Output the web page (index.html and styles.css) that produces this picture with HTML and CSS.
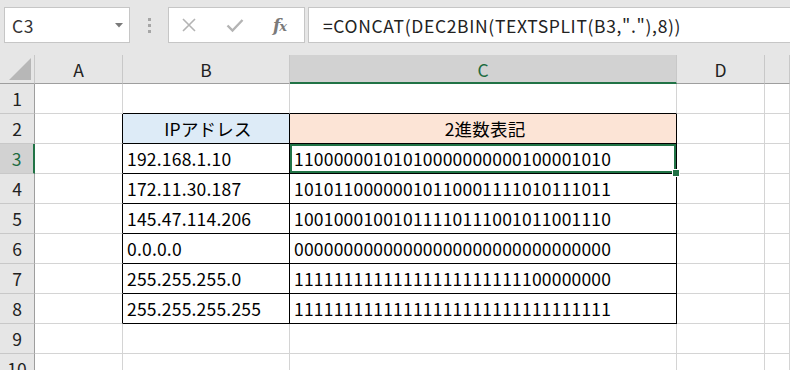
FILE: index.html
```html
<!DOCTYPE html>
<html lang="ja">
<head>
    <meta charset="UTF-8">
    <title>Excel - CONCAT</title>
    <link rel="stylesheet" href="styles.css">
</head>
<body>
    <div class="toolbar">
        <div class="namebox">
            <span>C3</span>
            <svg class="caret" width="8" height="5" viewBox="0 0 8 5"><path d="M0 0h8L4 4.5z" fill="#7a7a7a"/></svg>
        </div>
        <div class="grip">
            <i></i><i></i><i></i>
        </div>
        <div class="fxbox">
            <svg width="16" height="16" viewBox="0 0 16 16"><path d="M2 2l12 12M14 2L2 14" stroke="#b4b4b4" stroke-width="1.6" fill="none"/></svg>
            <svg width="18" height="16" viewBox="0 0 18 16"><path d="M1.5 8.5l5 5L16.5 3" stroke="#b4b4b4" stroke-width="2.4" fill="none"/></svg>
            <span class="fx">f<small>x</small></span>
        </div>
        <div class="formula">=CONCAT(DEC2BIN(TEXTSPLIT(B3,"."),8))</div>
    </div>

    <div class="sheet">
        <div class="hd corner"><svg width="22" height="22" viewBox="0 0 22 22"><path d="M0 22H22V0z" fill="#b7b7b7"/></svg></div>
        <div class="hd col">A</div>
        <div class="hd col">B</div>
        <div class="hd col sel-col">C</div>
        <div class="hd col">D</div>
        <div class="hd col"></div>

        <div class="hd row">1</div>
        <div class="c"></div>
        <div class="c tb"></div>
        <div class="c tb"></div>
        <div class="c"></div>
        <div class="c"></div>

        <div class="hd row">2</div>
        <div class="c tl"></div>
        <div class="c t th-blue">IPアドレス</div>
        <div class="c t th-orange">2進数表記</div>
        <div class="c"></div>
        <div class="c"></div>

        <div class="hd row sel-row">3</div>
        <div class="c tl"></div>
        <div class="c t">192.168.1.10</div>
        <div class="c t active">11000000101010000000000100001010</div>
        <div class="c"></div>
        <div class="c"></div>

        <div class="hd row">4</div>
        <div class="c tl"></div>
        <div class="c t">172.11.30.187</div>
        <div class="c t">10101100000010110001111010111011</div>
        <div class="c"></div>
        <div class="c"></div>

        <div class="hd row">5</div>
        <div class="c tl"></div>
        <div class="c t">145.47.114.206</div>
        <div class="c t">10010001001011110111001011001110</div>
        <div class="c"></div>
        <div class="c"></div>

        <div class="hd row">6</div>
        <div class="c tl"></div>
        <div class="c t">0.0.0.0</div>
        <div class="c t">00000000000000000000000000000000</div>
        <div class="c"></div>
        <div class="c"></div>

        <div class="hd row">7</div>
        <div class="c tl"></div>
        <div class="c t">255.255.255.0</div>
        <div class="c t">11111111111111111111111100000000</div>
        <div class="c"></div>
        <div class="c"></div>

        <div class="hd row">8</div>
        <div class="c tl"></div>
        <div class="c t">255.255.255.255</div>
        <div class="c t">11111111111111111111111111111111</div>
        <div class="c"></div>
        <div class="c"></div>

        <div class="hd row">9</div>
        <div class="c"></div>
        <div class="c"></div>
        <div class="c"></div>
        <div class="c"></div>
        <div class="c"></div>

        <div class="hd row">10</div>
        <div class="c"></div>
        <div class="c"></div>
        <div class="c"></div>
        <div class="c"></div>
        <div class="c"></div>
    </div>
</body>
</html>
```

FILE: styles.css
```css
body {
    margin: 0;
    width: 790px;
    height: 370px;
    overflow: hidden;
    background-color: #fff;
    font-family: "Noto Sans CJK JP", "Noto Sans", sans-serif;
    font-size: 17.5px;
    color: #000;
}

/* formula bar */
.toolbar {
    height: 55px;
    background-color: #e6e6e6;
    display: flex;
    align-items: flex-start;
    padding-top: 7px;
    box-sizing: border-box;
}

.namebox {
    margin-left: 4px;
    width: 126px;
    height: 36px;
    box-sizing: border-box;
    background-color: #fff;
    border: 1px solid #c6c6c6;
    display: flex;
    align-items: center;
    justify-content: space-between;
    padding: 0 6px 0 7px;
    color: #333;
    letter-spacing: 0.5px;
}

.grip {
    width: 38px;
    height: 36px;
    display: flex;
    flex-direction: column;
    align-items: center;
    justify-content: center;
    gap: 3px;
}

.grip i {
    display: block;
    width: 3px;
    height: 3px;
    background-color: #a6a6a6;
}

.fxbox {
    width: 137px;
    height: 36px;
    box-sizing: border-box;
    background-color: #fff;
    border: 1px solid #c6c6c6;
    display: flex;
    align-items: center;
    gap: 29px;
    padding-left: 12px;
}

.fx {
    font-family: "DejaVu Serif", serif;
    font-style: italic;
    font-weight: bold;
    font-size: 17px;
    color: #7a7a7a;
    letter-spacing: -1px;
}

.fx small {
    font-size: 13px;
}

.formula {
    flex: 1;
    margin-left: 3px;
    height: 36px;
    box-sizing: border-box;
    background-color: #fff;
    border: 1px solid #c6c6c6;
    border-right: none;
    display: flex;
    align-items: center;
    padding-left: 14px;
    color: #222;
    white-space: nowrap;
    letter-spacing: 0.65px;
}

/* sheet */
.sheet {
    display: grid;
    grid-template-columns: 35px 88px 167px 387px 88px 1fr;
    grid-template-rows: 29px repeat(10, 30px);
}

.hd {
    background-color: #e6e6e6;
    box-sizing: border-box;
    display: flex;
    align-items: center;
    justify-content: center;
    color: #222;
}

.col {
    border-right: 1px solid #c8c8c8;
    border-bottom: 1px solid #9e9e9e;
    padding-top: 1px;
}

.corner {
    border-right: 1px solid #c8c8c8;
    border-bottom: 1px solid #9e9e9e;
    justify-content: flex-end;
    align-items: flex-end;
    padding: 0 3px 3px 0;
}

.row {
    border-right: 1px solid #9e9e9e;
    border-bottom: 1px solid #c8c8c8;
}

.sel-col {
    background-color: #d2d2d2;
    border-bottom: 2px solid #217346;
    color: #1e6b40;
}

.sel-row {
    background-color: #d2d2d2;
    border-right: 2px solid #217346;
    color: #1e6b40;
}

.c {
    box-sizing: border-box;
    border-right: 1px solid #d4d4d4;
    border-bottom: 1px solid #d4d4d4;
    display: flex;
    align-items: center;
    padding-left: 4px;
    white-space: nowrap;
    letter-spacing: 0.2px;
}

.c.t {
    border-right-color: #000;
    border-bottom-color: #000;
}

.c.tb {
    border-bottom-color: #000;
}

.c.tl {
    border-right-color: #000;
}

.th-blue {
    background-color: #ddebf7;
    justify-content: center;
}

.th-orange {
    background-color: #fce4d6;
    justify-content: center;
}

.active {
    position: relative;
    box-shadow: inset 0 0 0 2px #217346;
    border-right-color: #217346;
    border-bottom-color: #217346;
}

.active::after {
    content: "";
    position: absolute;
    right: -4px;
    bottom: -4px;
    width: 6px;
    height: 6px;
    background-color: #217346;
    border: 1px solid #fff;
    z-index: 2;
}
```
